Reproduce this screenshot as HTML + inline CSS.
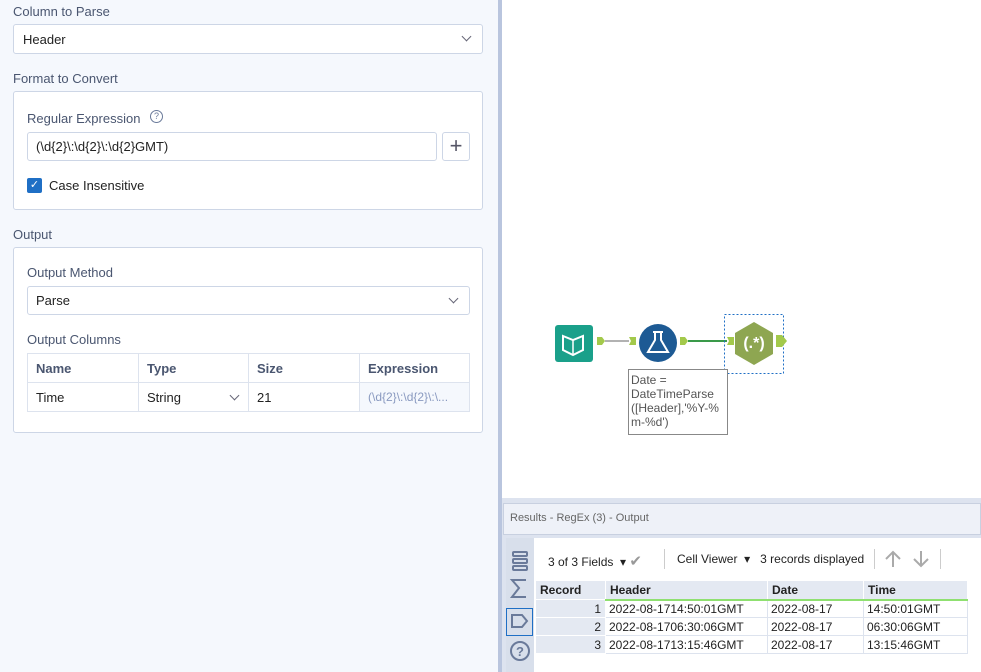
<!DOCTYPE html>
<html><head><style>
*{box-sizing:border-box;margin:0;padding:0}
body{width:981px;height:672px;overflow:hidden;position:relative;font-family:"Liberation Sans",sans-serif;background:#fff;font-size:13px;color:#222}
.abs{position:absolute}
.lbl{color:#4a5670;font-size:13px}
.box{background:#fff;border:1px solid #cdd6e6;border-radius:3px}
.chev{position:absolute;width:7px;height:7px;border-right:1.5px solid #667;border-bottom:1.5px solid #667;transform:rotate(45deg)}
table{border-collapse:collapse}
</style></head><body>
<div class="abs" style="left:0;top:0;width:498px;height:672px;background:#f5f8fd"></div>
<div class="abs" style="left:498px;top:0;width:4px;height:672px;background:#b9c5de"></div>

<div class="abs lbl" style="left:13px;top:4px">Column to Parse</div>
<div class="abs box" style="left:13px;top:24px;width:470px;height:30px"><span class="abs" style="left:9px;top:7px">Header</span><div class="chev" style="left:449px;top:8px"></div></div>
<div class="abs lbl" style="left:13px;top:71px">Format to Convert</div>
<div class="abs box" style="left:13px;top:91px;width:470px;height:119px">
 <span class="abs lbl" style="left:13px;top:19px">Regular Expression</span>
 <div class="abs" style="left:136px;top:18px;width:13px;height:13px;border:1px solid #6a7a9a;border-radius:50%;font-size:9px;text-align:center;line-height:11px;color:#6a7a9a">?</div>
 <div class="abs box" style="left:13px;top:40px;width:410px;height:29px"><span class="abs" style="left:8px;top:6px">(\d{2}\:\d{2}\:\d{2}GMT)</span></div>
 <div class="abs box" style="left:428px;top:40px;width:28px;height:29px;text-align:center;font-size:22px;line-height:25px;color:#556">+</div>
 <div class="abs" style="left:13px;top:86px;width:15px;height:15px;background:#1f6fc5;border-radius:2px;color:#fff;font-size:11px;text-align:center;line-height:15px">✓</div>
 <span class="abs" style="left:35px;top:86px">Case Insensitive</span>
</div>
<div class="abs lbl" style="left:13px;top:227px">Output</div>
<div class="abs box" style="left:13px;top:247px;width:470px;height:186px">
 <span class="abs lbl" style="left:13px;top:17px">Output Method</span>
 <div class="abs box" style="left:13px;top:38px;width:443px;height:29px"><span class="abs" style="left:8px;top:6px">Parse</span><div class="chev" style="left:422px;top:8px"></div></div>
 <span class="abs lbl" style="left:13px;top:84px">Output Columns</span>
 <table class="abs" style="left:13px;top:105px;width:443px;font-size:13px">
  <tr style="height:29px;background:#fff"><th style="border:1px solid #dde3ee;text-align:left;padding-left:8px;color:#4a5670;width:111px">Name</th><th style="border:1px solid #dde3ee;text-align:left;padding-left:8px;color:#4a5670;width:110px">Type</th><th style="border:1px solid #dde3ee;text-align:left;padding-left:8px;color:#4a5670;width:111px">Size</th><th style="border:1px solid #dde3ee;text-align:left;padding-left:8px;color:#4a5670">Expression</th></tr>
  <tr style="height:29px"><td style="border:1px solid #dde3ee;padding-left:8px">Time</td><td style="border:1px solid #dde3ee;padding-left:8px;position:relative">String<div class="chev" style="left:92px;top:9px"></div></td><td style="border:1px solid #dde3ee;padding-left:8px">21</td><td style="border:1px solid #dde3ee;padding-left:8px;color:#8a9ac0;background:#f5f8fd;font-size:12px">(\d{2}\:\d{2}\:\...</td></tr>
 </table>
</div>

<!-- canvas -->
<svg class="abs" style="left:502px;top:300px" width="479" height="140">
 <rect x="53" y="25" width="38" height="37" rx="3" fill="#1aa08a"/>
 <path d="M61 36 l10 4 l10-4 v14 l-10 5 l-10-5z" fill="none" stroke="#fff" stroke-width="2"/>
 <path d="M71 40 v14" stroke="#fff" stroke-width="1.5"/>
 <path d="M95 37 h5 l3 4 l-3 4 h-5z" fill="#a3c94b"/>
 <line x1="103" y1="41" x2="127" y2="41" stroke="#999" stroke-width="1.5"/>
 <path d="M127 37 h7 v8 h-7 l2-4z" fill="#a3c94b"/>
 <circle cx="156" cy="43" r="19" fill="#1d5a94"/>
 <path d="M151 32 h10 M153 32 v8 l-7 12 h20 l-7-12 v-8" fill="none" stroke="#fff" stroke-width="2"/>
 <path d="M178 37 h5 l3 4 l-3 4 h-5z" fill="#a3c94b"/>
 <line x1="186" y1="41" x2="225" y2="41" stroke="#3a9a4a" stroke-width="2"/>
 <path d="M225 37 h7 v8 h-7 l2-4z" fill="#a3c94b"/>
 <rect x="222.5" y="14.5" width="59" height="59" fill="none" stroke="#1f6fc5" stroke-dasharray="2,2"/>
 <path d="M252 22 l19 11 v21 l-19 11 l-19-11 v-21z" fill="#8ea651"/>
 <text x="252" y="48" text-anchor="middle" fill="#fff" font-size="16" font-weight="bold" font-family="Liberation Sans">(.*)</text>
 <path d="M274 35 h6 l5 6 l-5 6 h-6z" fill="#a3c94b"/>
 <rect x="126.5" y="69.5" width="99" height="65" fill="#fff" stroke="#888"/>
 <text font-size="12" fill="#555" font-family="Liberation Sans"><tspan x="129" y="84">Date =</tspan><tspan x="129" y="98">DateTimeParse</tspan><tspan x="129" y="112">([Header],'%Y-%</tspan><tspan x="129" y="126">m-%d')</tspan></text>
</svg>

<!-- results -->
<div class="abs" style="left:502px;top:498px;width:479px;height:174px;background:#dde3ef"></div>
<div class="abs" style="left:503px;top:503px;width:478px;height:32px;background:#eef1f8;border:1px solid #c8d0e0"></div>
<span class="abs" style="left:510px;top:512px;font-size:11px;color:#666">Results - RegEx (3) - Output</span>
<div class="abs" style="left:506px;top:538px;width:28px;height:134px;background:#d8dfeb"></div>
<div class="abs" style="left:534px;top:538px;width:447px;height:134px;background:#fff"></div>
<div class="abs" style="left:506px;top:608px;width:27px;height:28px;border:1px solid #1f6fc5"></div>
<svg class="abs" style="left:506px;top:540px" width="28" height="130">
 <g stroke="#6a7a9a" stroke-width="2" fill="none">
 <rect x="7" y="12" width="14" height="4" rx="1"/><rect x="7" y="19" width="14" height="4" rx="1"/><rect x="7" y="26" width="14" height="4" rx="1"/>
 <path d="M20 40 H6 l7 8 l-7 9 H20"/>
 <path d="M6 75 h10 l5 6 l-5 6 h-10z"/>
 <circle cx="14" cy="111" r="9"/>
 </g>
 <text x="14" y="116" text-anchor="middle" font-size="13" font-weight="bold" fill="#6a7a9a" font-family="Liberation Sans">?</text>
</svg>
<div class="abs" style="left:548px;top:552px;font-size:12px;color:#222">3 of 3 Fields &nbsp;▾ <span style="color:#999;font-size:15px">✔</span></div>
<div class="abs" style="left:664px;top:549px;width:1px;height:20px;background:#ccc"></div>
<div class="abs" style="left:677px;top:552px;font-size:12px">Cell Viewer &nbsp;▾ &nbsp;&nbsp;3 records displayed</div>
<div class="abs" style="left:874px;top:549px;width:1px;height:20px;background:#ccc"></div>
<svg class="abs" style="left:882px;top:549px" width="50" height="20"><g stroke="#aaa" stroke-width="2" fill="none"><path d="M11 18 V3 M4 10 l7-7 l7 7"/><path d="M39 2 V17 M32 10 l7 7 l7-7"/></g></svg>
<div class="abs" style="left:940px;top:549px;width:1px;height:20px;background:#ccc"></div>
<table class="abs" style="left:535px;top:580px;font-size:12px">
 <tr style="height:19px;background:#e4e9f2"><th style="width:70px;text-align:left;padding-left:4px;border:1px solid #fff">Record</th><th style="width:162px;text-align:left;padding-left:4px;border:1px solid #fff;border-bottom:2px solid #8fe070">Header</th><th style="width:96px;text-align:left;padding-left:4px;border:1px solid #fff;border-bottom:2px solid #8fe070">Date</th><th style="width:104px;text-align:left;padding-left:4px;border:1px solid #fff;border-bottom:2px solid #8fe070">Time</th></tr>
 <tr style="height:18px"><td style="text-align:right;padding-right:4px;background:#e4e9f2;border:1px solid #fff">1</td><td style="padding-left:3px;border:1px solid #dde3ee">2022-08-1714:50:01GMT</td><td style="padding-left:3px;border:1px solid #dde3ee">2022-08-17</td><td style="padding-left:3px;border:1px solid #dde3ee">14:50:01GMT</td></tr>
 <tr style="height:18px"><td style="text-align:right;padding-right:4px;background:#e4e9f2;border:1px solid #fff">2</td><td style="padding-left:3px;border:1px solid #dde3ee">2022-08-1706:30:06GMT</td><td style="padding-left:3px;border:1px solid #dde3ee">2022-08-17</td><td style="padding-left:3px;border:1px solid #dde3ee">06:30:06GMT</td></tr>
 <tr style="height:18px"><td style="text-align:right;padding-right:4px;background:#e4e9f2;border:1px solid #fff">3</td><td style="padding-left:3px;border:1px solid #dde3ee">2022-08-1713:15:46GMT</td><td style="padding-left:3px;border:1px solid #dde3ee">2022-08-17</td><td style="padding-left:3px;border:1px solid #dde3ee">13:15:46GMT</td></tr>
</table>
</body></html>
